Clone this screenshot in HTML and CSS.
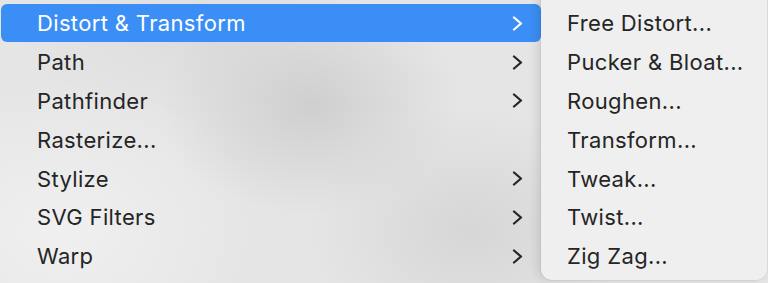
FILE: index.html
```html
<!DOCTYPE html>
<html>
<head>
<meta charset="utf-8">
<link rel="stylesheet" href="styles.css">
</head>
<body>
<div class="screen">
  <div class="menu">
    <div class="item active"><span class="label">Distort &amp; Transform</span><svg class="chev" viewBox="0 0 11 15"><path d="M2 1.5 L9 7.5 L2 13.5"/></svg></div>
    <div class="item"><span class="label">Path</span><svg class="chev" viewBox="0 0 11 15"><path d="M2 1.5 L9 7.5 L2 13.5"/></svg></div>
    <div class="item"><span class="label">Pathfinder</span><svg class="chev" viewBox="0 0 11 15"><path d="M2 1.5 L9 7.5 L2 13.5"/></svg></div>
    <div class="item"><span class="label">Rasterize...</span></div>
    <div class="item"><span class="label">Stylize</span><svg class="chev" viewBox="0 0 11 15"><path d="M2 1.5 L9 7.5 L2 13.5"/></svg></div>
    <div class="item"><span class="label">SVG Filters</span><svg class="chev" viewBox="0 0 11 15"><path d="M2 1.5 L9 7.5 L2 13.5"/></svg></div>
    <div class="item"><span class="label">Warp</span><svg class="chev" viewBox="0 0 11 15"><path d="M2 1.5 L9 7.5 L2 13.5"/></svg></div>
  </div>
  <div class="submenu">
    <div class="sitem">Free Distort...</div>
    <div class="sitem">Pucker &amp; Bloat...</div>
    <div class="sitem">Roughen...</div>
    <div class="sitem">Transform...</div>
    <div class="sitem">Tweak...</div>
    <div class="sitem">Twist...</div>
    <div class="sitem">Zig Zag...</div>
  </div>
</div>
</body>
</html>
```
FILE: styles.css
```css
html, body {
  margin: 0;
  padding: 0;
  width: 768px;
  height: 283px;
  overflow: hidden;
}
body {
  background: #3a3a3a;
  font-family: Inter, "Noto Sans", "Liberation Sans", sans-serif;
}
.screen {
  width: 768px;
  height: 283px;
  display: flex;
  background:
    radial-gradient(ellipse 150px 110px at 310px 105px, #cfcfcf 0%, rgba(210,210,210,0) 100%),
    radial-gradient(ellipse 160px 120px at 470px 230px, #d6d6d6 0%, rgba(214,214,214,0) 100%),
    radial-gradient(ellipse 200px 150px at 60px 230px, #f0f0f0 0%, rgba(240,240,240,0) 100%),
    radial-gradient(ellipse 180px 80px at 200px 40px, #dddddd 0%, rgba(221,221,221,0) 100%),
    #e5e5e5;
}
.menu {
  width: 541px;
  flex: none;
  padding-top: 4px;
  box-sizing: border-box;
}
.item {
  height: 38.8px;
  display: flex;
  align-items: center;
  padding-left: 37px;
  padding-right: 18px;
  box-sizing: border-box;
  color: #252525;
  font-size: 22px;
  letter-spacing: 0.35px;
}
.item.active {
  height: 38px;
  margin-bottom: 0.8px;
  margin-left: 1px;
  padding-left: 36px;
  background: #3b8ef5;
  color: #ffffff;
  border-radius: 6px;
}
.label {
  flex: 1;
}
.chev {
  width: 11px;
  height: 15px;
  flex: none;
  fill: none;
  stroke: #262626;
  stroke-width: 2.3;
  stroke-linecap: round;
  stroke-linejoin: round;
}
.active .chev {
  stroke: #ffffff;
}
.submenu {
  width: 226px;
  height: 290px;
  margin-top: -10px;
  flex: none;
  padding-top: 14px;
  box-sizing: border-box;
  background: #efefef;
  border-radius: 0 0 11px 11px;
  box-shadow: -4px 0 10px rgba(0,0,0,0.10), 0 0 0 0.5px rgba(0,0,0,0.08);
}
.sitem {
  height: 38.8px;
  display: flex;
  align-items: center;
  padding-left: 26px;
  color: #252525;
  font-size: 22px;
  letter-spacing: 0.35px;
}
```
